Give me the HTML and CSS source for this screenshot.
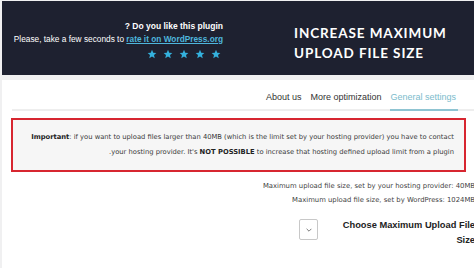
FILE: index.html
```html
<!DOCTYPE html>
<html lang="en">
<head>
    <meta charset="UTF-8">
    <meta name="viewport" content="width=device-width, initial-scale=1.0">
    <title>Increase Maximum Upload File Size</title>
    <link rel="stylesheet" href="styles.css">
</head>
<body>
    <div class="wrap">
        <header class="banner">
            <div class="rate">
                <p class="rate-title">? Do you like this plugin</p>
                <p class="rate-text">Please, take a few seconds to <a href="#">rate it on WordPress.org</a></p>
                <div class="stars">
                    <svg viewBox="0 0 24 24"><path d="M12 2l3 7 7.5.6-5.7 4.9 1.8 7.4L12 18l-6.6 3.9 1.8-7.4L1.5 9.6 9 9z"/></svg>
                    <svg viewBox="0 0 24 24"><path d="M12 2l3 7 7.5.6-5.7 4.9 1.8 7.4L12 18l-6.6 3.9 1.8-7.4L1.5 9.6 9 9z"/></svg>
                    <svg viewBox="0 0 24 24"><path d="M12 2l3 7 7.5.6-5.7 4.9 1.8 7.4L12 18l-6.6 3.9 1.8-7.4L1.5 9.6 9 9z"/></svg>
                    <svg viewBox="0 0 24 24"><path d="M12 2l3 7 7.5.6-5.7 4.9 1.8 7.4L12 18l-6.6 3.9 1.8-7.4L1.5 9.6 9 9z"/></svg>
                    <svg viewBox="0 0 24 24"><path d="M12 2l3 7 7.5.6-5.7 4.9 1.8 7.4L12 18l-6.6 3.9 1.8-7.4L1.5 9.6 9 9z"/></svg>
                </div>
            </div>
            <h1 class="logo">INCREASE MAXIMUM<br>UPLOAD FILE SIZE</h1>
        </header>

        <main class="content">
            <nav class="tabs">
                <a href="#">About us</a>
                <a href="#">More optimization</a>
                <a href="#" class="active">General settings</a>
            </nav>

            <div class="notice">
                <p><b>Important</b>: if you want to upload files larger than 40MB (which is the limit set by your hosting provider) you have to contact your hosting provider. It's <b>NOT POSSIBLE</b> to increase that hosting defined upload limit from a plugin.</p>
            </div>

            <div class="limits">
                <p>Maximum upload file size, set by your hosting provider: 40MB</p>
                <p>Maximum upload file size, set by WordPress: 1024MB</p>
            </div>

            <div class="choose">
                <div class="select">
                    <svg width="6" height="4" viewBox="0 0 10 6"><path d="M1 1l4 4 4-4"/></svg>
                </div>
                <span class="choose-label">Choose Maximum Upload File Size</span>
            </div>
        </main>
    </div>
</body>
</html>
```

FILE: styles.css
```css
body {
    margin: 0;
    background-color: #f0f0f1;
    font-family: 'Liberation Sans', Arial, sans-serif;
    overflow: hidden;
}

.wrap {
    padding: 1px 0 0 2px;
}

.banner {
    height: 74px;
    background-color: #1e2130;
    display: flex;
    justify-content: space-between;
    align-items: center;
}

.rate {
    width: 221px;
    text-align: right;
    color: #fff;
    padding-top: 2px;
    white-space: nowrap;
}

.rate p {
    margin: 0;
}

.rate-title {
    font-size: 8.5px;
    font-weight: bold;
    line-height: 14px;
}

.rate-text {
    font-size: 8.3px;
    line-height: 13px;
}

.rate-text a {
    color: #4eb6dc;
    font-weight: bold;
}

.stars {
    display: flex;
    justify-content: flex-end;
    gap: 6px;
    padding-top: 3px;
    padding-right: 2px;
}

.stars svg {
    width: 10px;
    height: 10px;
    fill: #34b1dd;
}

.logo {
    width: 168px;
    margin: 9px 12px 0 0;
    white-space: nowrap;
    color: #fff;
    font-family: Lato, sans-serif;
    font-weight: bold;
    font-size: 13.5px;
    line-height: 20px;
    letter-spacing: 0.9px;
}

.content {
    margin-top: 5px;
    background-color: #fff;
    height: 184px;
    padding-top: 8px;
}

.tabs {
    margin-left: 10px;
    display: flex;
    justify-content: flex-end;
    gap: 9px;
    padding-right: 16px;
    border-bottom: 2px solid #eeeeee;
}

.tabs a {
    font-size: 9px;
    color: #333;
    text-decoration: none;
    padding: 4px 0 7px;
}

.tabs a.active {
    color: #7bbccc;
    border-bottom: 2px solid #8fc4d2;
    margin-bottom: -2px;
    padding-right: 2px;
}

.notice {
    margin: 7px 8px 0 9px;
    border: 2px solid #d72630;
    background-color: #f6f6f6;
    height: 50px;
    display: flex;
    align-items: center;
    padding: 0 10px;
}

.notice p {
    margin: 0;
    direction: rtl;
    font-family: 'DejaVu Sans', sans-serif;
    font-size: 6.75px;
    line-height: 15px;
    color: #3a3a3a;
}

.notice b {
    color: #222;
}

.limits {
    text-align: right;
    font-family: 'DejaVu Sans', sans-serif;
    font-size: 6.85px;
    line-height: 14px;
    color: #444;
    margin-top: 7px;
    margin-right: -1px;
}

.limits p {
    margin: 0;
}

.choose {
    display: flex;
    justify-content: flex-end;
    align-items: flex-start;
    margin-top: 11px;
}

.select {
    width: 17px;
    height: 19px;
    border: 1px solid #c8c8c8;
    border-radius: 2px;
    display: flex;
    align-items: center;
    justify-content: center;
    margin-top: 1px;
}

.select svg {
    fill: none;
    stroke: #555;
    stroke-width: 1.3;
}

.choose-label {
    width: 140px;
    margin-left: 17px;
    margin-right: -1px;
    text-align: right;
    font-family: 'Liberation Sans', Arial, sans-serif;
    font-weight: bold;
    font-size: 9.3px;
    line-height: 15px;
    color: #222;
}
```
